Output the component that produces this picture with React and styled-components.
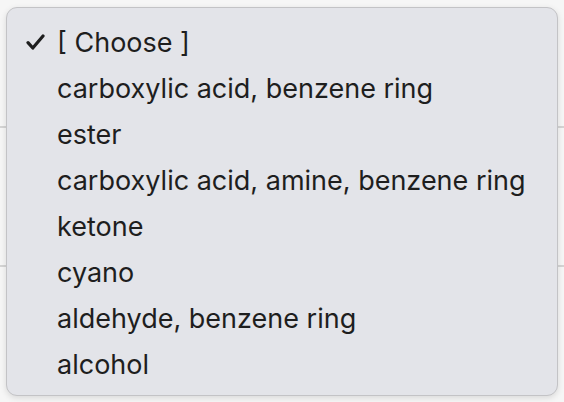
import React from 'react';
import styled, { createGlobalStyle } from 'styled-components';

const GlobalStyle = createGlobalStyle`
  html, body {
    margin: 0;
    padding: 0;
    background: #f6f6f6;
  }
  body {
    font-family: Inter, "Liberation Sans", sans-serif;
    -webkit-font-smoothing: antialiased;
  }
`;

const Page = styled.div`
  position: relative;
  width: 564px;
  height: 402px;
  overflow: hidden;
`;

const Backdrop = styled.div`
  display: flex;
  flex-direction: column;
  height: 100%;
`;

const BackRow = styled.div`
  height: ${p => p.h}px;
  border-bottom: ${p => (p.last ? 'none' : '2px solid #d4d4d4')};
  box-sizing: border-box;
`;

const Menu = styled.ul`
  position: absolute;
  top: 7px;
  left: 6px;
  width: 552px;
  height: 389px;
  box-sizing: border-box;
  margin: 0;
  padding: 11px 0 9px;
  list-style: none;
  background: #e3e4e9;
  border: 1px solid #c3c3c6;
  border-radius: 11px;
  box-shadow: 0 2px 6px rgba(0, 0, 0, 0.12);
`;

const Item = styled.li`
  position: relative;
  display: flex;
  align-items: center;
  height: 46px;
  padding-left: 50px;
  font-size: 27px;
  color: #1e1e1e;
  white-space: nowrap;
`;

const Check = styled.svg`
  position: absolute;
  left: 19px;
  top: 15px;
  width: 19px;
  height: 16px;
`;

const options = [
  '[ Choose ]',
  'carboxylic acid, benzene ring',
  'ester',
  'carboxylic acid, amine, benzene ring',
  'ketone',
  'cyano',
  'aldehyde, benzene ring',
  'alcohol',
];

export default function App() {
  const selected = 0;
  return (
    <Page>
      <GlobalStyle />
      <Backdrop>
        <BackRow h={128} />
        <BackRow h={139} />
        <BackRow h={135} last />
      </Backdrop>
      <Menu>
        {options.map((opt, i) => (
          <Item key={opt}>
            {i === selected && (
              <Check viewBox="0 0 19 16">
                <path
                  d="M2 8.6 L6.8 14 L17 2"
                  fill="none"
                  stroke="#1e1e1e"
                  strokeWidth="3.2"
                  strokeLinecap="round"
                  strokeLinejoin="round"
                />
              </Check>
            )}
            {opt}
          </Item>
        ))}
      </Menu>
    </Page>
  );
}
